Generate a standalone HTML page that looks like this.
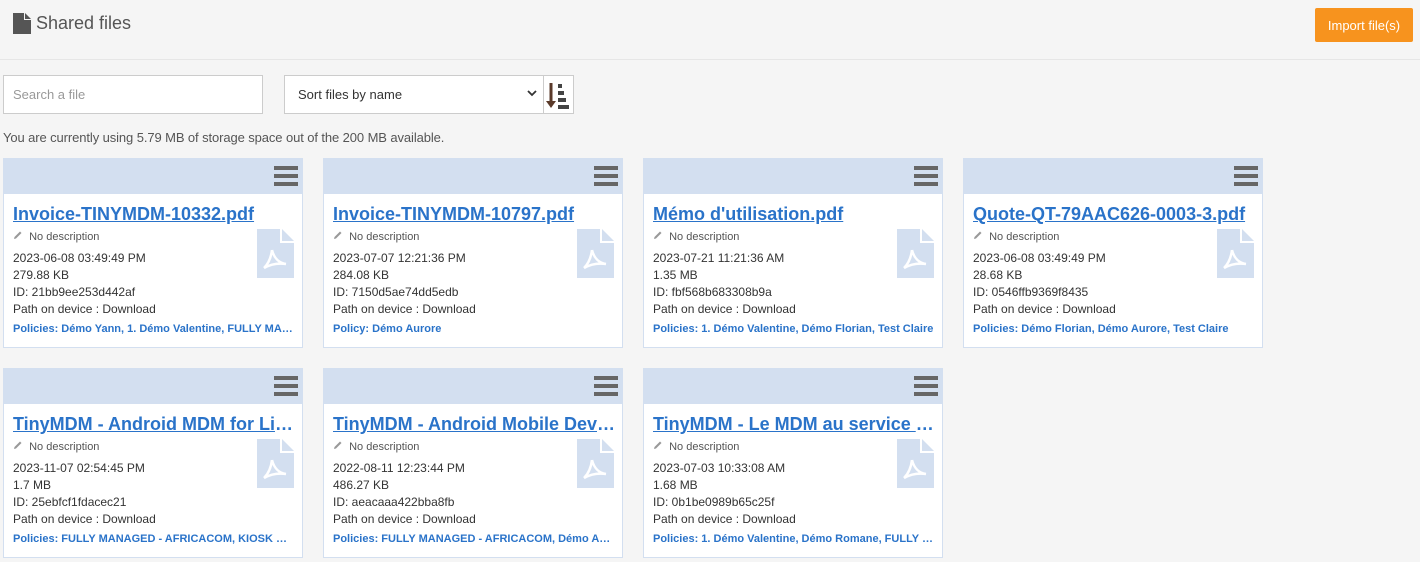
<!DOCTYPE html>
<html><head><meta charset="utf-8"><style>
*{box-sizing:border-box;margin:0;padding:0}
body{width:1420px;height:562px;background:#f5f5f5;font-family:"Liberation Sans",Arial,sans-serif;color:#333;position:relative;overflow:hidden}
.hdr{position:absolute;left:0;top:0;width:1420px;height:60px;border-bottom:1px solid #e6e6e6}
.title{position:absolute;left:13px;top:13px;font-size:18px;color:#555;display:flex;align-items:center;gap:5px}
.btn{position:absolute;left:1315px;top:8px;width:98px;height:34px;background:#f7931e;color:#fff;border-radius:2px;font-size:13px;display:flex;align-items:center;justify-content:center}
.search{position:absolute;left:3px;top:75px;width:260px;height:39px;background:#fff;border:1px solid #ccc;font-size:13px;color:#999;padding:11px 9px}
.sort{position:absolute;left:284px;top:75px;width:260px;height:39px;background:#fff;border:1px solid #ccc;font-size:13px;color:#333;padding:11px 13px}
.sort .chev{position:absolute;right:6px;top:12px}
.sbtn{position:absolute;left:543px;top:75px;width:31px;height:39px;background:#fff;border:1px solid #ccc}
.usage{position:absolute;left:3px;top:130px;font-size:13px;color:#555;letter-spacing:-0.1px}
.card{position:absolute;width:300px;height:190px;background:#fff;border:1px solid #d3dff0}
.card .top{height:35px;background:#d3dff0;position:relative}
.card .top .m{position:absolute;right:4px;top:7px;width:24px}
.card .top .m i{display:block;height:4px;background:#666;margin-bottom:4px}
.card h3{position:absolute;left:9px;top:45px;width:282px;font-size:18px;font-weight:bold;color:#2a73c9;text-decoration:underline;white-space:nowrap;overflow:hidden;text-overflow:ellipsis}
.card .d{position:absolute;left:9px;top:71px;font-size:11px;color:#555}
.card .l{position:absolute;left:9px;font-size:12px;color:#333}
.card .p{position:absolute;left:9px;top:164px;width:282px;font-size:11px;font-weight:bold;color:#2a73c9;white-space:nowrap;overflow:hidden;text-overflow:ellipsis}
.card svg.pdf{position:absolute;left:251px;top:69px}
</style></head><body>
<div class="hdr">
<div class="title"><svg width="18" height="21" viewBox="0 0 18 21"><path d="M0 0H11V7H18V21H0Z" fill="#555"/><path d="M12 0L18 6H12Z" fill="#555"/></svg>Shared files</div>
<div class="btn">Import file(s)</div>
</div>
<div class="search">Search a file</div>
<div class="sort">Sort files by name<svg class="chev" width="10" height="10" viewBox="0 0 10 10"><path d="M1 3L5 7L9 3" stroke="#333" stroke-width="1.8" fill="none"/></svg></div>
<div class="sbtn"><svg width="29" height="37" viewBox="0 0 29 37"><path d="M7 7V27" stroke="#5a3a2a" stroke-width="3"/><path d="M2 25L7 32L12 25Z" fill="#5a3a2a"/><rect x="14" y="8" width="4" height="4" fill="#444"/><rect x="14" y="15" width="6" height="4" fill="#444"/><rect x="14" y="22" width="8" height="4" fill="#444"/><rect x="14" y="29" width="11" height="4" fill="#444"/></svg></div>
<div class="usage">You are currently using 5.79 MB of storage space out of the 200 MB available.</div>

<div id="cards"></div>
<script>
var c=[
["Invoice-TINYMDM-10332.pdf","2023-06-08 03:49:49 PM","279.88 KB","21bb9ee253d442af","Policies: Démo Yann, 1. Démo Valentine, FULLY MANAGED"],
["Invoice-TINYMDM-10797.pdf","2023-07-07 12:21:36 PM","284.08 KB","7150d5ae74dd5edb","Policy: Démo Aurore"],
["Mémo d'utilisation.pdf","2023-07-21 11:21:36 AM","1.35 MB","fbf568b683308b9a","Policies: 1. Démo Valentine, Démo Florian, Test Claire"],
["Quote-QT-79AAC626-0003-3.pdf","2023-06-08 03:49:49 PM","28.68 KB","0546ffb9369f8435","Policies: Démo Florian, Démo Aurore, Test Claire"],
["TinyMDM - Android MDM for Linux","2023-11-07 02:54:45 PM","1.7 MB","25ebfcf1fdacec21","Policies: FULLY MANAGED - AFRICACOM, KIOSK MODE"],
["TinyMDM - Android Mobile Device","2022-08-11 12:23:44 PM","486.27 KB","aeacaaa422bba8fb","Policies: FULLY MANAGED - AFRICACOM, Démo Aurore"],
["TinyMDM - Le MDM au service de","2023-07-03 10:33:08 AM","1.68 MB","0b1be0989b65c25f","Policies: 1. Démo Valentine, Démo Romane, FULLY MANAGED"]];
var h="";
c.forEach(function(x,i){var L=3+(i%4)*320,T=158+Math.floor(i/4)*210;
h+='<div class="card" style="left:'+L+'px;top:'+T+'px"><div class="top"><div class="m"><i></i><i></i><i></i></div></div><h3>'+x[0]+'</h3>'+
'<div class="d"><svg width="10" height="10" viewBox="0 0 10 10"><path d="M1 9L1.5 7L7 1.5L8.5 3L3 8.5Z" fill="#999"/></svg>&nbsp; No description</div>'+
'<div class="l" style="top:92px">'+x[1]+'</div><div class="l" style="top:109px">'+x[2]+'</div><div class="l" style="top:126px">ID: '+x[3]+'</div><div class="l" style="top:143px">Path on device : Download</div>'+
'<div class="p">'+x[4]+'</div>'+
'<svg class="pdf" width="40" height="52" viewBox="0 0 40 52"><path d="M2 1H25V15H39V50H2Z" fill="#d3dff0"/><path d="M27 1L39 13H27Z" fill="#d3dff0"/><path d="M17 22C16 30 13 36 9 40M17 22C19 30 24 35 31 36M9 40C16 36 24 35 31 36" stroke="#fff" stroke-width="2.5" fill="none"/></svg></div>';});
document.getElementById("cards").innerHTML=h;
</script>
</body></html>
